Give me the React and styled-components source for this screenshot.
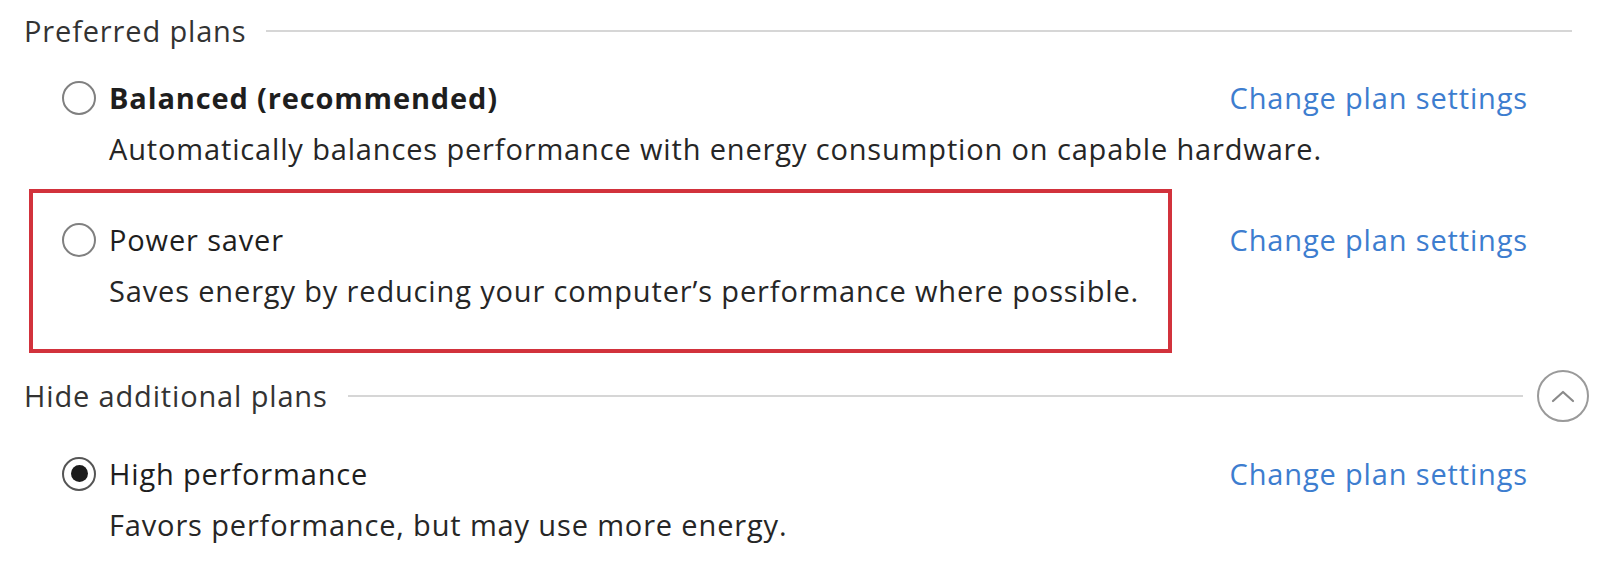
import React from 'react';
import styled, { createGlobalStyle } from 'styled-components';

const GlobalStyle = createGlobalStyle`
  html, body {
    margin: 0;
    padding: 0;
    background: #ffffff;
  }
  body {
    font-family: "Open Sans", "Noto Sans", "Liberation Sans", sans-serif;
    color: #222;
  }
`;

const Page = styled.div`
  width: 1600px;
  height: 562px;
  box-sizing: border-box;
  padding: 5px 14px 0 24px;
  overflow: hidden;
  font-size: 29px;
  letter-spacing: 0.85px;
  -webkit-font-smoothing: antialiased;
`;

const SectionHeader = styled.div`
  display: flex;
  align-items: center;
  height: 51px;
  margin-top: ${({ $top }) => $top || 0}px;
`;

const HeaderLabel = styled.span`
  color: #333;
  white-space: nowrap;
  line-height: 51px;
`;

const HeaderRule = styled.div`
  flex: 1;
  height: 2px;
  background: #d6d6d6;
  margin-left: 20px;
  margin-right: ${({ $end }) => $end || 0}px;
`;

const CollapseButton = styled.div`
  width: 48px;
  height: 48px;
  margin-left: 14px;
  margin-right: -3px;
  border: 2px solid #9a9a9a;
  border-radius: 50%;
  display: flex;
  align-items: center;
  justify-content: center;
  flex-shrink: 0;
`;

const PlanRow = styled.div`
  display: flex;
  align-items: flex-start;
  justify-content: space-between;
  margin-top: ${({ $top }) => $top || 0}px;
  padding-left: 38px;
  padding-right: 58px;
`;

const PlanBody = styled.div`
  display: grid;
  grid-template-columns: 34px minmax(0, 1fr);
  column-gap: 13px;
  align-items: center;
  line-height: 51px;
  flex: 1;
  min-width: 0;
  ${({ $highlighted }) =>
    $highlighted &&
    `
    flex: none;
    margin-left: -33px;
    padding: 21px 37px 33px 29px;
    border: 4px solid #d2323c;
    width: 1069px;
  `}
`;

const Radio = styled.span`
  width: 34px;
  height: 34px;
  box-sizing: border-box;
  border-radius: 50%;
  border: 2px solid ${({ $checked }) => ($checked ? '#555' : '#808080')};
  display: flex;
  align-items: center;
  justify-content: center;
  background: #fff;

  &::after {
    content: '';
    display: ${({ $checked }) => ($checked ? 'block' : 'none')};
    width: 17px;
    height: 17px;
    border-radius: 50%;
    background: #1c1c1c;
  }
`;

const PlanTitle = styled.span`
  font-weight: ${({ $bold }) => ($bold ? 700 : 400)};
  color: #1e1e1e;
  white-space: nowrap;
`;

const PlanDesc = styled.span`
  grid-column: 2;
  color: #262626;
  white-space: nowrap;
`;

const ChangeLink = styled.a`
  flex-shrink: 0;
  color: #3d7dcf;
  text-decoration: none;
  line-height: 51px;
  white-space: nowrap;
  margin-top: ${({ $top }) => $top || 0}px;
  cursor: pointer;
`;

const ChevronUp = () => (
  <svg width="24" height="14" viewBox="0 0 24 14" fill="none">
    <path d="M2 12 L12 3 L22 12" stroke="#8a8a8a" strokeWidth="2.2" strokeLinecap="round" strokeLinejoin="round" />
  </svg>
);

const Plan = ({ title, desc, bold, checked, highlighted, top }) => (
  <PlanRow $top={top}>
    <PlanBody $highlighted={highlighted}>
      <Radio $checked={checked} />
      <PlanTitle $bold={bold}>{title}</PlanTitle>
      <PlanDesc>{desc}</PlanDesc>
    </PlanBody>
    <ChangeLink $top={highlighted ? 25 : 0}>Change plan settings</ChangeLink>
  </PlanRow>
);

export default function App() {
  return (
    <>
      <GlobalStyle />
      <Page>
        <SectionHeader>
          <HeaderLabel>Preferred plans</HeaderLabel>
          <HeaderRule $end={14} />
        </SectionHeader>

        <Plan
          top={16}
          bold
          title="Balanced (recommended)"
          desc="Automatically balances performance with energy consumption on capable hardware."
        />
        <Plan
          top={15}
          highlighted
          title="Power saver"
          desc="Saves energy by reducing your computer’s performance where possible."
        />

        <SectionHeader $top={17}>
          <HeaderLabel>Hide additional plans</HeaderLabel>
          <HeaderRule />
          <CollapseButton>
            <ChevronUp />
          </CollapseButton>
        </SectionHeader>

        <Plan
          top={27}
          checked
          title="High performance"
          desc="Favors performance, but may use more energy."
        />
      </Page>
    </>
  );
}
